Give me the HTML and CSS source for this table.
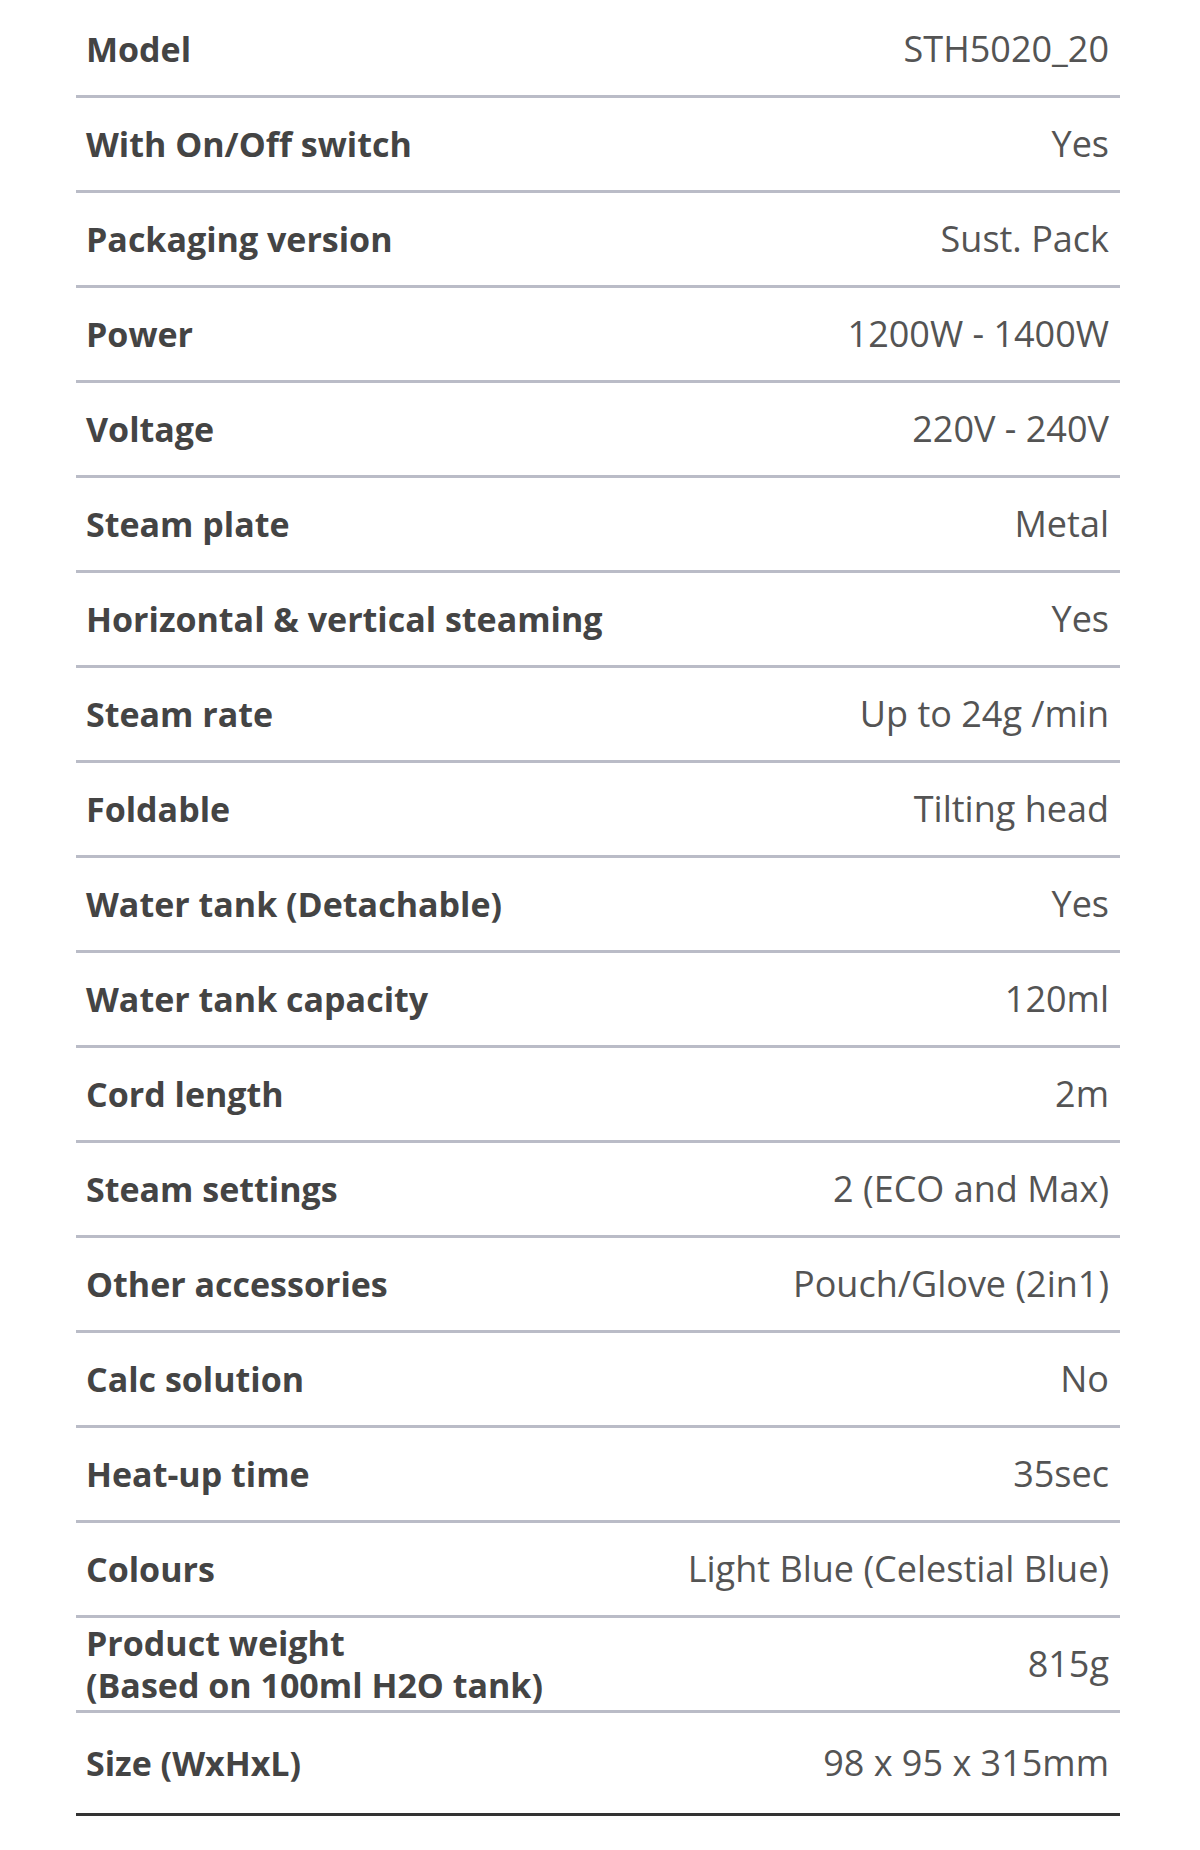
FILE: index.html
```html
<!DOCTYPE html>
<html lang="en">
<head>
<meta charset="utf-8">
<title>Specifications</title>
<link rel="stylesheet" href="styles.css">
</head>
<body>
<div class="specs">
  <div class="row"><div class="label">Model</div><div class="value">STH5020_20</div></div>
  <div class="row"><div class="label">With On/Off switch</div><div class="value">Yes</div></div>
  <div class="row"><div class="label">Packaging version</div><div class="value">Sust. Pack</div></div>
  <div class="row"><div class="label">Power</div><div class="value">1200W - 1400W</div></div>
  <div class="row"><div class="label">Voltage</div><div class="value">220V - 240V</div></div>
  <div class="row"><div class="label">Steam plate</div><div class="value">Metal</div></div>
  <div class="row"><div class="label">Horizontal &amp; vertical steaming</div><div class="value">Yes</div></div>
  <div class="row"><div class="label">Steam rate</div><div class="value">Up to 24g /min</div></div>
  <div class="row"><div class="label">Foldable</div><div class="value">Tilting head</div></div>
  <div class="row"><div class="label">Water tank (Detachable)</div><div class="value">Yes</div></div>
  <div class="row"><div class="label">Water tank capacity</div><div class="value">120ml</div></div>
  <div class="row"><div class="label">Cord length</div><div class="value">2m</div></div>
  <div class="row"><div class="label">Steam settings</div><div class="value">2 (ECO and Max)</div></div>
  <div class="row"><div class="label">Other accessories</div><div class="value">Pouch/Glove (2in1)</div></div>
  <div class="row"><div class="label">Calc solution</div><div class="value">No</div></div>
  <div class="row"><div class="label">Heat-up time</div><div class="value">35sec</div></div>
  <div class="row"><div class="label">Colours</div><div class="value">Light Blue (Celestial Blue)</div></div>
  <div class="row"><div class="label"><span class="line">Product weight</span><span class="line">(Based on 100ml H2O tank)</span></div><div class="value">815g</div></div>
  <div class="row last"><div class="label">Size (WxHxL)</div><div class="value">98 x 95 x 315mm</div></div>
</div>
</body>
</html>
```
FILE: styles.css
```css
html, body {
  margin: 0;
  padding: 0;
  background: #ffffff;
}

body {
  font-family: "Open Sans", "Noto Sans", "Liberation Sans", sans-serif;
}

.specs {
  width: 1044px;
  margin: 3px 0 0 76px;
  display: flex;
  flex-direction: column;
}

.row {
  display: flex;
  justify-content: space-between;
  align-items: center;
  height: 92px;
  padding: 0 11px 0 10px;
  border-bottom: 3px solid #babcc7;
}

.row.last {
  height: 100px;
  border-bottom: 3px solid #333333;
}

.label {
  display: flex;
  flex-direction: column;
  font-size: 34px;
  font-weight: 700;
  line-height: 42px;
  color: #444444;
}

.line {
  display: block;
  line-height: 42px;
}

.value {
  font-size: 36px;
  font-weight: 400;
  line-height: 42px;
  color: #545454;
  text-align: right;
}
```
